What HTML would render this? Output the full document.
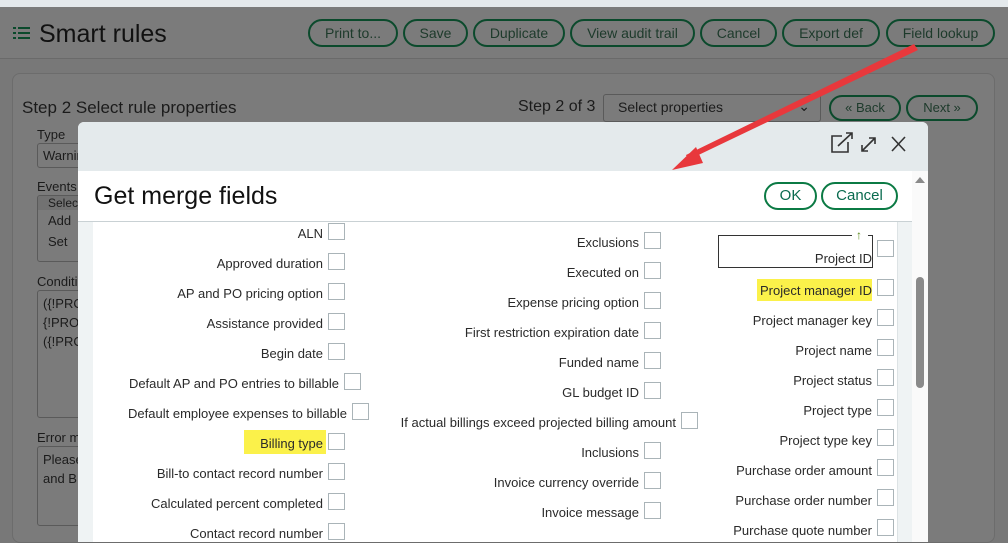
<!DOCTYPE html>
<html style="background:#787878"><head><meta charset="utf-8"><style>
*{margin:0;padding:0;box-sizing:border-box}
html{background:#787878}
body{width:1008px;height:530px;overflow:hidden;position:relative;background:#787878;font-family:"Liberation Sans",sans-serif;color:#1b1b1b}
.a{position:absolute}
.btn{position:absolute;height:28px;border:2px solid #0b4a2c;border-radius:14px;font-size:14px;line-height:24px;text-align:center;color:#1d3a2b;background:#7b7b7b}
.l{position:absolute;font-size:13px;line-height:16px;white-space:nowrap;color:#2a2a2a;text-align:right}
.cb{position:absolute;width:17px;height:17px;border:1px solid #aab4b8;background:#fff}
.hl{background:#fbf14a}
.fld{position:absolute;font-size:13px;color:#1b1b1b;border:1px solid #5a5a5a;border-radius:3px;background:#7b7b7b;overflow:hidden;padding:3px 5px;line-height:22px}
</style></head><body>
<div class="a" style="left:0;top:0;width:1008px;height:7px;background:#e4e9ec"></div>
<div class="a" style="left:0;top:7px;width:1008px;height:52px;background:#7b7b7b;border-bottom:1px solid #6a6a6a"></div>
<svg class="a" style="left:13px;top:26px" width="18" height="15" viewBox="0 0 18 15"><g fill="#0b4a2c"><rect x="0" y="1" width="3" height="2"/><rect x="5" y="1" width="12" height="2"/><rect x="0" y="6" width="3" height="2"/><rect x="5" y="6" width="12" height="2"/><rect x="0" y="11" width="3" height="2"/><rect x="5" y="11" width="12" height="2"/></g></svg>
<div class="a" style="left:39px;top:20px;font-size:25px;color:#111">Smart rules</div>
<div class="btn" style="left:308px;top:19px;width:90px">Print to...</div>
<div class="btn" style="left:403px;top:19px;width:65px">Save</div>
<div class="btn" style="left:473px;top:19px;width:92px">Duplicate</div>
<div class="btn" style="left:570px;top:19px;width:125px">View audit trail</div>
<div class="btn" style="left:700px;top:19px;width:77px">Cancel</div>
<div class="btn" style="left:782px;top:19px;width:98px">Export def</div>
<div class="btn" style="left:886px;top:19px;width:109px">Field lookup</div>

<div class="a" style="left:12px;top:73px;width:983px;height:470px;border:1px solid #6c6c6c;border-radius:8px;background:#7b7b7b"></div>
<div class="a" style="left:22px;top:98px;font-size:17px;color:#1b1b1b">Step 2 Select rule properties</div>
<div class="a" style="left:518px;top:98px;font-size:16px">Step 2 of 3</div>
<div class="fld" style="left:603px;top:94px;width:218px;height:28px;font-size:14px;padding:1px 14px">Select properties<span style="position:absolute;right:10px;top:0">⌄</span></div>
<div class="btn" style="left:829px;top:95px;width:72px;height:26px;line-height:22px;font-size:13px">« Back</div>
<div class="btn" style="left:906px;top:95px;width:72px;height:26px;line-height:22px;font-size:13px">Next »</div>
<div class="a" style="left:37px;top:127px;font-size:13px">Type</div>
<div class="fld" style="left:37px;top:143px;width:60px;height:25px;line-height:17px">Warning</div>
<div class="a" style="left:37px;top:179px;font-size:13px">Events</div>
<div class="fld" style="left:37px;top:195px;width:60px;height:67px;padding:0;line-height:21px"><div style="background:#727272;padding-left:10px;line-height:14px;font-size:12px">Select</div><div style="padding-left:10px">Add</div><div style="padding-left:10px">Set</div></div>
<div class="a" style="left:37px;top:274px;font-size:13px">Conditions</div>
<div class="fld" style="left:37px;top:290px;width:60px;height:128px;line-height:19px">({!PRO<br>{!PRO<br>({!PRO</div>
<div class="a" style="left:37px;top:430px;font-size:13px">Error msg</div>
<div class="fld" style="left:37px;top:446px;width:60px;height:80px;line-height:19px">Please<br>and B</div>

<div class="a" style="left:78px;top:122px;width:850px;height:420px;background:#fff;border-radius:6px 6px 0 0;overflow:hidden">
  <div class="a" style="left:0;top:0;width:850px;height:49px;background:#e4eaec"></div>
  <div class="a" style="left:0;top:99px;width:834px;height:1px;background:#c9d1d4"></div>
  <div class="a" style="left:0;top:100px;width:15px;height:320px;background:#eff3f4"></div>
  <div class="a" style="left:819px;top:100px;width:15px;height:320px;background:#eff3f4;border-left:1px solid #dde3e5"></div>
  <div class="a" style="left:834px;top:49px;width:16px;height:371px;background:#fafafa"></div>
</div>
<div class="a" style="left:94px;top:182px;font-size:25px;color:#111">Get merge fields</div>
<svg class="a" style="left:830px;top:132px" width="80" height="24" viewBox="0 0 80 24">
<g fill="none" stroke="#333" stroke-width="1.6"><path d="M12 4H2V20H18V10"/><path d="M8 14L22 1M16 1H22V7"/>
<path d="M32 19L45 6M32 13V19H38M45 12V6H39"/>
<path d="M62 5L75 19M75 5L62 19"/></g></svg>
<div class="btn" style="left:764px;top:182px;width:53px;border-color:#0b7a44;color:#0a6b4f;font-size:15px;background:#fff">OK</div>
<div class="btn" style="left:821px;top:182px;width:77px;border-color:#0b7a44;color:#0a6b4f;font-size:15px;background:#fff">Cancel</div>
<svg class="a" style="left:914px;top:175px" width="12" height="10"><path d="M1 8L6 2L11 8Z" fill="#8a8a8a"/></svg>
<div class="a" style="left:916px;top:277px;width:8px;height:111px;border-radius:4px;background:#8a8a8a"></div>

<div class="l" style="right:685px;top:226px">ALN</div><div class="cb" style="left:328px;top:223px"></div>
<div class="l" style="right:685px;top:256px">Approved duration</div><div class="cb" style="left:328px;top:253px"></div>
<div class="l" style="right:685px;top:286px">AP and PO pricing option</div><div class="cb" style="left:328px;top:283px"></div>
<div class="l" style="right:685px;top:316px">Assistance provided</div><div class="cb" style="left:328px;top:313px"></div>
<div class="l" style="right:685px;top:346px">Begin date</div><div class="cb" style="left:328px;top:343px"></div>
<div class="l" style="right:669px;top:376px">Default AP and PO entries to billable</div><div class="cb" style="left:344px;top:373px"></div>
<div class="l" style="right:661px;top:406px">Default employee expenses to billable</div><div class="cb" style="left:352px;top:403px"></div>
<div class="a hl" style="left:244px;top:430px;width:82px;height:24px"></div>
<div class="l" style="right:685px;top:436px">Billing type</div><div class="cb" style="left:328px;top:433px"></div>
<div class="l" style="right:685px;top:466px">Bill-to contact record number</div><div class="cb" style="left:328px;top:463px"></div>
<div class="l" style="right:685px;top:496px">Calculated percent completed</div><div class="cb" style="left:328px;top:493px"></div>
<div class="l" style="right:685px;top:526px">Contact record number</div><div class="cb" style="left:328px;top:523px"></div>

<div class="l" style="right:369px;top:235px">Exclusions</div><div class="cb" style="left:644px;top:232px"></div>
<div class="l" style="right:369px;top:265px">Executed on</div><div class="cb" style="left:644px;top:262px"></div>
<div class="l" style="right:369px;top:295px">Expense pricing option</div><div class="cb" style="left:644px;top:292px"></div>
<div class="l" style="right:369px;top:325px">First restriction expiration date</div><div class="cb" style="left:644px;top:322px"></div>
<div class="l" style="right:369px;top:355px">Funded name</div><div class="cb" style="left:644px;top:352px"></div>
<div class="l" style="right:369px;top:385px">GL budget ID</div><div class="cb" style="left:644px;top:382px"></div>
<div class="l" style="right:332px;top:415px">If actual billings exceed projected billing amount</div><div class="cb" style="left:681px;top:412px"></div>
<div class="l" style="right:369px;top:445px">Inclusions</div><div class="cb" style="left:644px;top:442px"></div>
<div class="l" style="right:369px;top:475px">Invoice currency override</div><div class="cb" style="left:644px;top:472px"></div>
<div class="l" style="right:369px;top:505px">Invoice message</div><div class="cb" style="left:644px;top:502px"></div>

<div class="a" style="left:718px;top:235px;width:155px;height:33px;border:1px solid #333"></div>
<div class="a" style="left:852px;top:232px;width:16px;height:6px;background:#fff"></div>
<div class="a" style="left:856px;top:229px;color:#5a8a1a;font-size:12px;line-height:12px">↑</div>
<div class="l" style="right:136px;top:251px">Project ID</div><div class="cb" style="left:877px;top:240px"></div>
<div class="a hl" style="left:757px;top:279px;width:115px;height:22px"></div>
<div class="l" style="right:136px;top:283px">Project manager ID</div><div class="cb" style="left:877px;top:279px"></div>
<div class="l" style="right:136px;top:313px">Project manager key</div><div class="cb" style="left:877px;top:309px"></div>
<div class="l" style="right:136px;top:343px">Project name</div><div class="cb" style="left:877px;top:339px"></div>
<div class="l" style="right:136px;top:373px">Project status</div><div class="cb" style="left:877px;top:369px"></div>
<div class="l" style="right:136px;top:403px">Project type</div><div class="cb" style="left:877px;top:399px"></div>
<div class="l" style="right:136px;top:433px">Project type key</div><div class="cb" style="left:877px;top:429px"></div>
<div class="l" style="right:136px;top:463px">Purchase order amount</div><div class="cb" style="left:877px;top:459px"></div>
<div class="l" style="right:136px;top:493px">Purchase order number</div><div class="cb" style="left:877px;top:489px"></div>
<div class="l" style="right:136px;top:523px">Purchase quote number</div><div class="cb" style="left:877px;top:519px"></div>

<svg class="a" style="left:0;top:0" width="1008" height="530"><g fill="#e8383c">
<path d="M914 44L918 50L688 160L686 155Z"/><path d="M672 170L696 147L703 163Z"/></g></svg>
</body></html>
